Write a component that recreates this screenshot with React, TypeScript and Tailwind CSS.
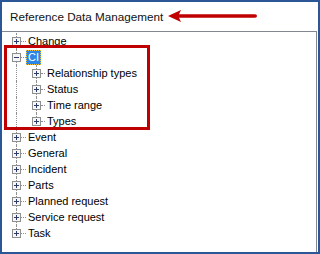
type TreeRow = {
  label: string;
  level: 0 | 1;
  expanded?: boolean;
  selected?: boolean;
  last?: boolean;
};

const rows: TreeRow[] = [
  { label: "Change", level: 0 },
  { label: "CI", level: 0, expanded: true, selected: true },
  { label: "Relationship types", level: 1 },
  { label: "Status", level: 1 },
  { label: "Time range", level: 1 },
  { label: "Types", level: 1, last: true },
  { label: "Event", level: 0 },
  { label: "General", level: 0 },
  { label: "Incident", level: 0 },
  { label: "Parts", level: 0 },
  { label: "Planned request", level: 0 },
  { label: "Service request", level: 0 },
  { label: "Task", level: 0, last: true },
];

const ExpandBox = ({ expanded }: { expanded?: boolean }) => (
  <svg width="9" height="9" viewBox="0 0 9 9" className="relative block shrink-0">
    <rect x="0.5" y="0.5" width="8" height="8" fill="#f6f6f6" stroke="#8e8f8f" />
    <line x1="2" y1="4.5" x2="7" y2="4.5" stroke="#2c3b6b" />
    {!expanded && <line x1="4.5" y1="2" x2="4.5" y2="7" stroke="#2c3b6b" />}
  </svg>
);

const Row = ({ row }: { row: TreeRow }) => {
  const isTop = row.level === 0;
  return (
    <div className="relative h-4 flex items-center">
      <span
        className={`absolute left-[14px] top-0 w-0 border-l border-dotted border-[#8f8f8f] ${
          isTop && row.last ? "h-2" : "h-4"
        }`}
      />
      {!isTop && (
        <span
          className={`absolute left-[34px] top-0 w-0 border-l border-dotted border-[#8f8f8f] ${
            row.last ? "h-2" : "h-4"
          }`}
        />
      )}
      <div className={`flex items-center ${isTop ? "ml-[10px]" : "ml-[30px]"}`}>
        <ExpandBox expanded={row.expanded} />
        <span
          className={`h-0 border-t border-dotted border-[#8f8f8f] ${isTop ? "w-[5px]" : "w-[4px]"}`}
        />
        <span
          className={`h-[15px] leading-[13px] px-[1px] border ${
            row.selected
              ? "bg-[#2b86e6] text-white border-dotted border-[#f0c040]"
              : "border-transparent text-black"
          }`}
        >
          {row.label}
        </span>
      </div>
    </div>
  );
};

export default function App() {
  return (
    <div
      className="relative w-[320px] h-[254px] border-2 border-[#2b5797] bg-white flex flex-col"
      style={{ fontFamily: '"Liberation Sans", Arial, sans-serif' }}
    >
      <div className="h-[29px] shrink-0 flex items-center pl-[8px]">
        <span className="text-[11.7px] text-[#111]">Reference Data Management</span>
        <svg width="92" height="14" viewBox="0 0 92 14" className="ml-[5px] mt-[-1px]">
          <path d="M0 7 L13 1 L11 5.3 L87 5.3 Q89 5.3 89 7 Q89 8.7 87 8.7 L11 8.7 L13 13 Z" fill="#c00000" />
        </svg>
      </div>
      <div className="flex-1 mr-[1px] border-t border-r border-[#828790] pt-[1px] text-[11px]">
        {rows.map((r) => (
          <Row key={r.label} row={r} />
        ))}
      </div>
      <div className="absolute left-[2px] top-[43px] w-[146px] h-[85px] border-[3px] border-[#c00000]" />
    </div>
  );
}
